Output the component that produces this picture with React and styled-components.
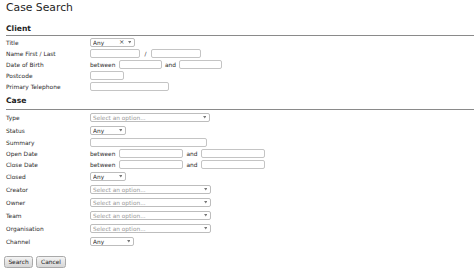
import styled, { createGlobalStyle } from "styled-components";

const Global = createGlobalStyle`
  html, body {
    margin: 0;
    padding: 0;
    background: #fff;
  }
  body {
    font-family: "DejaVu Sans", Verdana, sans-serif;
    color: #2b2b2b;
  }
`;

const Page = styled.div`
  width: 474px;
  height: 274px;
  overflow: hidden;
  padding-left: 6px;
  box-sizing: border-box;
`;

const Title = styled.h1`
  margin: 0;
  padding-top: 1px;
  font-size: 10.8px;
  line-height: 14px;
  font-weight: normal;
  color: #1e1e1e;
`;

const Section = styled.h2`
  margin: ${(p) => p.top}px 0 0 0;
  padding-bottom: ${(p) => p.gap}px;
  border-bottom: 1.5px solid #8a8a8a;
  font-size: 7.6px;
  line-height: 9px;
  font-weight: bold;
  color: #1e1e1e;
`;

const Form = styled.div`
  display: grid;
  grid-template-columns: 84px 1fr;
  padding-top: ${(p) => p.top}px;
`;

const Label = styled.div`
  height: ${(p) => (p.tall ? 13 : 11)}px;
  display: flex;
  align-items: center;
  font-size: 5.9px;
  color: #2b2b2b;
`;

const Field = styled.div`
  height: ${(p) => (p.tall ? 13 : 11)}px;
  display: flex;
  align-items: center;
  font-size: 5.9px;
  color: #2b2b2b;
`;

const Input = styled.input`
  box-sizing: border-box;
  width: ${(p) => p.w}px;
  height: 8.5px;
  margin: 0;
  padding: 0 2px;
  border: 1px solid #c4c4c4;
  border-radius: 2px;
  background: #fff;
  font-size: 5.8px;
  outline: none;
`;

const Word = styled.span`
  display: inline-block;
  width: ${(p) => p.w}px;
  text-align: ${(p) => p.align || "left"};
`;

const Select = styled.div`
  box-sizing: border-box;
  width: ${(p) => p.w}px;
  height: 8.5px;
  display: flex;
  align-items: center;
  padding: 0 2px;
  border: 1px solid #bdbdbd;
  border-radius: 2px;
  background: #fff;
  font-size: 5.8px;
  color: ${(p) => (p.placeholder ? "#9a9a9a" : "#2b2b2b")};
`;

const SelectText = styled.span`
  flex: 1;
  white-space: nowrap;
  overflow: hidden;
`;

const Clear = styled.span`
  font-size: 6.5px;
  color: #444;
  margin-right: 3px;
  line-height: 1;
`;

const Arrow = styled.svg`
  width: 3.5px;
  height: 2.5px;
  margin-right: 1px;
  flex: none;
`;

const Buttons = styled.div`
  display: flex;
  gap: 3px;
  margin: 8px 0 0 -2px;
`;

const Button = styled.button`
  box-sizing: border-box;
  width: ${(p) => p.w}px;
  height: 12px;
  margin: 0;
  padding: 0;
  border: 1px solid #a9a9a9;
  border-radius: 2.5px;
  background: linear-gradient(#f4f4f4, #d6d6d6);
  font-family: "DejaVu Sans", Verdana, sans-serif;
  font-size: 5.9px;
  color: #222;
`;

const Chooser = ({ w, value, placeholder, clearable }) => (
  <Select w={w} placeholder={placeholder ? 1 : 0}>
    <SelectText>{value || placeholder}</SelectText>
    {clearable && <Clear>×</Clear>}
    <Arrow viewBox="0 0 4 3">
      <polygon points="0,0 4,0 2,3" fill="#777" />
    </Arrow>
  </Select>
);

const Between = ({ w, andW }) => (
  <>
    <Word w={29}>between</Word>
    <Input w={w} />
    <Word w={andW} align="center">and</Word>
    <Input w={w} />
  </>
);

export default function App() {
  return (
    <Page>
      <Global />
      <Title>Case Search</Title>

      <Section top={9} gap={2}>Client</Section>
      <Form top={1}>
        <Label>Title</Label>
        <Field><Chooser w={45} value="Any" clearable /></Field>

        <Label>Name First / Last</Label>
        <Field>
          <Input w={50} />
          <Word w={11} align="center">/</Word>
          <Input w={50} />
        </Field>

        <Label>Date of Birth</Label>
        <Field><Between w={43} andW={17} /></Field>

        <Label>Postcode</Label>
        <Field><Input w={34} /></Field>

        <Label>Primary Telephone</Label>
        <Field><Input w={79} /></Field>
      </Form>

      <Section top={4} gap={4}>Case</Section>
      <Form top={1}>
        <Label tall>Type</Label>
        <Field tall><Chooser w={120} placeholder="Select an option..." /></Field>

        <Label tall>Status</Label>
        <Field tall><Chooser w={36} value="Any" /></Field>

        <Label>Summary</Label>
        <Field><Input w={117} /></Field>

        <Label>Open Date</Label>
        <Field><Between w={64} andW={18} /></Field>

        <Label>Close Date</Label>
        <Field><Between w={64} andW={18} /></Field>

        <Label tall>Closed</Label>
        <Field tall><Chooser w={36} value="Any" /></Field>

        <Label tall>Creator</Label>
        <Field tall><Chooser w={121} placeholder="Select an option..." /></Field>

        <Label tall>Owner</Label>
        <Field tall><Chooser w={121} placeholder="Select an option..." /></Field>

        <Label tall>Team</Label>
        <Field tall><Chooser w={121} placeholder="Select an option..." /></Field>

        <Label tall>Organisation</Label>
        <Field tall><Chooser w={121} placeholder="Select an option..." /></Field>

        <Label tall>Channel</Label>
        <Field tall><Chooser w={44} value="Any" /></Field>
      </Form>

      <Buttons>
        <Button w={29}>Search</Button>
        <Button w={30}>Cancel</Button>
      </Buttons>
    </Page>
  );
}
